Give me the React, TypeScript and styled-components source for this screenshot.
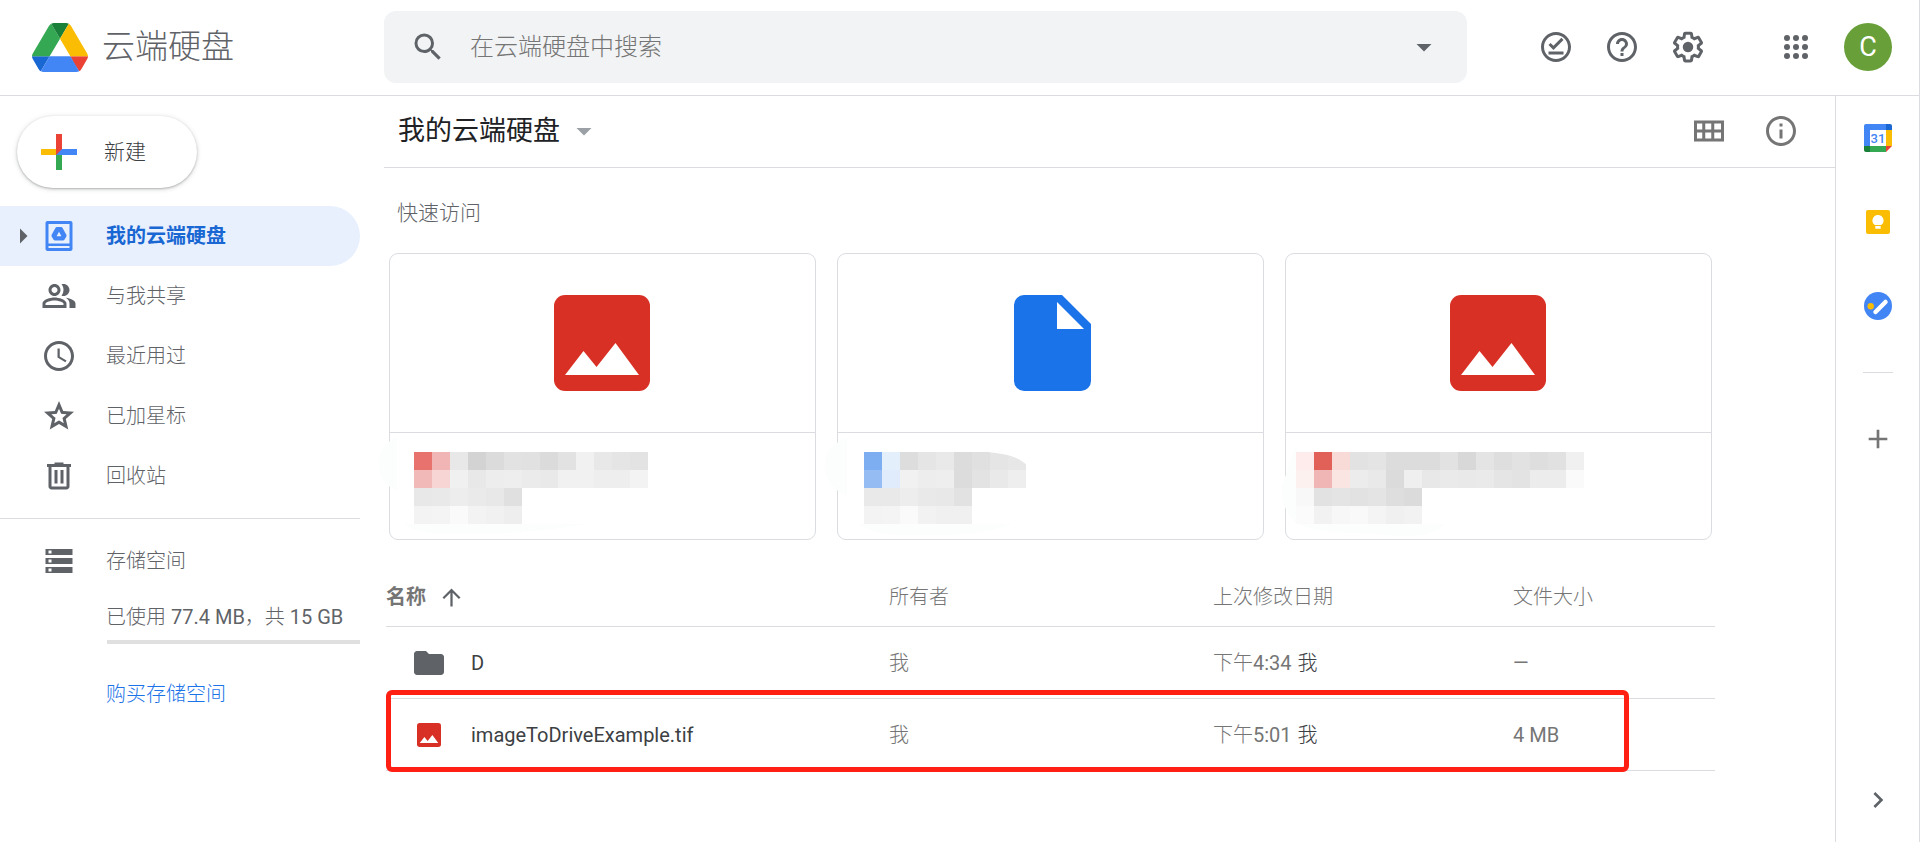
import React from 'react';
import styled, { createGlobalStyle, css } from 'styled-components';
import {
  MdAdd,
  MdArrowDropDown,
  MdArrowRight,
  MdArrowUpward,
  MdChevronRight,
  MdFolder,
  MdHelpOutline,
  MdInfoOutline,
  MdOutlineGrade,
  MdOutlineOfflinePin,
  MdSchedule,
  MdSearch,
} from 'react-icons/md';

const color = {
  line: '#dadce0',
  icon: '#5f6368',
  muted: '#757575',
  text: '#3c4043',
  title: '#202124',
  blue: '#1967d2',
  link: '#1a73e8',
  red: '#d93025',
};

const GlobalStyle = createGlobalStyle`
  *, *::before, *::after { box-sizing: border-box; }
  body {
    margin: 0;
    background: #fff;
    color: ${color.icon};
    font-family: Roboto, "Noto Sans CJK SC", sans-serif;
    font-size: 20px;
    line-height: 24px;
  }
  button, input { font: inherit; color: inherit; }
  h1, h2 { margin: 0; font-weight: 300; }
  a { text-decoration: none; }
  svg { display: block; flex: none; }
`;

const Page = styled.div`
  display: flex;
  flex-direction: column;
  min-height: 100vh;
  border-right: 1px solid ${color.line};
`;

const Header = styled.header`
  display: flex;
  align-items: center;
  height: 96px;
  padding: 0 27px 1px 0;
  border-bottom: 1px solid ${color.line};
`;

const Brand = styled.a`
  display: flex;
  align-items: center;
  gap: 14px;
  width: 384px;
  flex: none;
  padding-left: 32px;
  color: ${color.icon};
  font-size: 33px;
  font-weight: 300;
  line-height: 40px;
`;

const SearchBar = styled.form`
  display: flex;
  align-items: center;
  flex: 1;
  height: 72px;
  padding: 0 25px 0 26px;
  border-radius: 12px;
  background: #f1f3f4;
`;

const SearchInput = styled.input`
  flex: 1;
  min-width: 0;
  height: 48px;
  margin: 0 24px;
  padding: 0;
  border: 0;
  outline: 0;
  background: transparent;
  font-size: 24px;
  font-weight: 300;
  &::placeholder { color: ${color.muted}; opacity: 1; }
`;

const IconButton = styled.button`
  display: grid;
  place-items: center;
  flex: none;
  min-width: 36px;
  min-height: 36px;
  padding: 0;
  border: 0;
  background: transparent;
  color: ${(p) => p.color || color.icon};
  cursor: pointer;
`;

const HeaderActions = styled.div`
  display: flex;
  gap: 30px;
  margin-left: 71px;
`;

const AccountActions = styled.div`
  display: flex;
  align-items: center;
  gap: 30px;
  margin-left: 72px;
`;

const Avatar = styled.button`
  width: 48px;
  height: 48px;
  padding: 0;
  border: 0;
  border-radius: 50%;
  background: #689f38;
  color: #fff;
  font-size: 27px;
`;

const Body = styled.div`
  display: flex;
  flex: 1;
`;

const Sidebar = styled.aside`
  width: 360px;
  flex: none;
  margin-right: 24px;
  padding-top: 20px;
`;

const NewButton = styled.button`
  display: flex;
  align-items: center;
  gap: 27px;
  width: 180px;
  height: 72px;
  margin: 0 0 18px 17px;
  padding: 0 24px;
  border: 0;
  border-radius: 36px;
  background: #fff;
  box-shadow: 0 1px 2px rgba(60, 64, 67, 0.3), 0 1px 4px 1px rgba(60, 64, 67, 0.15);
  color: ${color.text};
  font-size: 21px;
  font-weight: 300;
`;

const NavItem = styled.a<{ $active?: boolean }>`
  display: flex;
  align-items: center;
  height: 60px;
  padding-left: 41px;
  gap: 29px;
  color: ${color.icon};
  font-weight: 300;
  ${(p) =>
    p.$active &&
    css`
      padding-left: 5px;
      border-radius: 0 30px 30px 0;
      background: #e8f0fe;
      color: ${color.blue};
      font-weight: 700;
    `}
`;

const NavGlyphs = styled.span`
  display: flex;
  align-items: center;
  color: ${color.icon};
`;

const Storage = styled.section`
  margin-top: 12px;
  padding-top: 12px;
  border-top: 1px solid ${color.line};
`;

const StorageDetails = styled.div`
  display: flex;
  flex-direction: column;
  padding: 14px 0 0 106px;
`;

const Meter = styled.div`
  height: 4px;
  margin: 11px 0 38px 1px;
  background: #e0e0e0;
`;

const BuyLink = styled.a`
  color: ${color.link};
  font-weight: 300;
`;

const Main = styled.main`
  flex: 1;
  min-width: 0;
`;

const Toolbar = styled.div`
  display: flex;
  align-items: center;
  justify-content: space-between;
  height: 72px;
  padding: 0 36px 1px 14px;
  border-bottom: 1px solid ${color.line};
`;

const PathTitle = styled.h1`
  display: flex;
  align-items: center;
  gap: 6px;
  color: ${color.title};
  font-size: 27px;
  font-weight: 400;
  line-height: 36px;
`;

const ToolbarActions = styled.div`
  display: flex;
  gap: 36px;
`;

const Content = styled.div`
  padding: 33px 120px 0 2px;
`;

const SectionTitle = styled.h2`
  padding-left: 11px;
  font-size: 21px;
`;

const Cards = styled.div`
  display: grid;
  grid-template-columns: repeat(3, 1fr);
  gap: 21px;
  margin: 28px 3px 0;
`;

const Card = styled.article`
  height: 287px;
  border: 1px solid ${color.line};
  border-radius: 9px;
`;

const Preview = styled.div`
  display: grid;
  place-items: center;
  height: 179px;
  padding-right: 2px;
  border-bottom: 1px solid ${color.line};
`;

const Caption = styled.div`
  position: relative;
`;

const Mosaic = styled.svg`
  position: absolute;
  top: -1px;
  left: -16px;
`;

const TableWrap = styled.div`
  position: relative;
  margin-top: 27px;
`;

const Table = styled.table`
  width: 100%;
  table-layout: fixed;
  border-collapse: separate;
  border-spacing: 0;
`;

const Col = styled.col<{ $w?: number }>`
  width: ${(p) => (p.$w ? `${p.$w}px` : 'auto')};
`;

const Th = styled.th<{ $strong?: boolean }>`
  height: 60px;
  padding: 1px 0 0;
  border-bottom: 1px solid ${color.line};
  color: ${color.muted};
  font-weight: ${(p) => (p.$strong ? 700 : 300)};
  text-align: left;
`;

const SortButton = styled.button`
  display: flex;
  align-items: center;
  gap: 12px;
  padding: 0;
  border: 0;
  background: transparent;
  svg { color: ${color.icon}; }
`;

const Td = styled.td`
  height: 72px;
  padding: 0;
  border-bottom: 1px solid ${color.line};
  color: ${color.muted};
  white-space: nowrap;
`;

const FileName = styled.span`
  display: flex;
  align-items: center;
  gap: 24px;
  padding-left: 25px;
  color: ${color.text};
`;

const FileGlyph = styled.span`
  display: grid;
  place-items: center;
  width: 36px;
  height: 36px;
  color: ${color.icon};
`;

const Cjk = styled.span<{ $by?: boolean }>`
  font-weight: 300;
  ${(p) =>
    p.$by &&
    css`
      margin-left: 6px;
      color: ${color.text};
    `}
`;

const Highlight = styled.div`
  position: absolute;
  left: 0;
  right: 86px;
  bottom: -1px;
  height: 82px;
  border: 5px solid #ff2013;
  border-radius: 6px;
  pointer-events: none;
`;

const SidePanel = styled.aside`
  display: flex;
  flex-direction: column;
  align-items: center;
  width: 84px;
  flex: none;
  padding: 24px 0;
  border-left: 1px solid ${color.line};
`;

const AppList = styled.div`
  display: grid;
  gap: 48px;
`;

const PanelRule = styled.hr`
  width: 30px;
  height: 1px;
  margin: 48px 0;
  border: 0;
  background: ${color.line};
`;

const PanelToggle = styled(IconButton)`
  margin-top: auto;
`;

const DriveLogo = () => (
  <svg width="56" height="49" viewBox="0 0 87.3 78" preserveAspectRatio="none">
    <path d="m6.6 66.85 3.85 6.65c.8 1.4 1.95 2.5 3.3 3.3l13.75-23.8h-27.5c0 1.55.4 3.1 1.2 4.5z" fill="#1967d2" />
    <path d="m43.65 25-13.75-23.8c-1.35.8-2.5 1.9-3.3 3.3l-25.4 44a9.06 9.06 0 0 0 -1.2 4.5h27.5z" fill="#34a853" />
    <path d="m73.55 76.8c1.35-.8 2.5-1.9 3.3-3.3l1.6-2.75 7.65-13.25c.8-1.4 1.2-2.95 1.2-4.5h-27.5l5.85 11.5z" fill="#ea4335" />
    <path d="m43.65 25 13.75-23.8c-1.35-.8-2.9-1.2-4.5-1.2h-18.5c-1.6 0-3.15.45-4.5 1.2z" fill="#188038" />
    <path d="m59.8 53h-32.3l-13.75 23.8c1.35.8 2.9 1.2 4.5 1.2h50.8c1.6 0 3.15-.45 4.5-1.2z" fill="#4285f4" />
    <path d="m73.4 26.5-12.7-22c-.8-1.4-1.95-2.5-3.3-3.3l-13.75 23.8 16.15 28h27.45c0-1.55-.4-3.1-1.2-4.5z" fill="#fbbc04" />
  </svg>
);

const PlusMark = () => (
  <svg width="36" height="36" viewBox="0 0 36 36">
    <path fill="#34a853" d="M15 15v21h6V21z" />
    <path fill="#4285f4" d="M36 15H20l-5 6h21z" />
    <path fill="#fbbc04" d="M0 15h15v6H0z" />
    <path fill="#ea4335" d="M21 15V0h-6v21z" />
  </svg>
);

const Glyph = ({ d, children }: { d?: string; children?: React.ReactNode }) => (
  <svg width="36" height="36" viewBox="0 0 24 24" fill="currentColor">
    {d && <path fillRule="evenodd" d={d} />}
    {children}
  </svg>
);

const MyDriveIcon = () => (
  <svg width="36" height="36" viewBox="0 0 24 24">
    <path
      fill="#4285f4"
      fillRule="evenodd"
      d="M4.3 2h15.4C20.4 2 21 2.6 21 3.3v17.4c0 .7-.6 1.3-1.3 1.3H4.3c-.7 0-1.3-.6-1.3-1.3V3.3C3 2.6 3.6 2 4.3 2zM5 4v13h14V4zM5 18.6V20h14v-1.4z"
    />
    <path
      fill="#4285f4"
      fillRule="evenodd"
      d="M10.6 6h2.8c.4 0 .7.2.9.5l2.6 4.7c.2.4.2.8 0 1.1l-1.3 2.2c-.2.3-.5.5-.9.5H9.3c-.4 0-.7-.2-.9-.5l-1.3-2.2c-.2-.3-.2-.7 0-1.1L9.7 6.5c.2-.3.5-.5.9-.5zM12 9.2l-1.6 2.9h3.2z"
    />
  </svg>
);

const PEOPLE =
  'M15 8c0-1.42-.5-2.73-1.33-3.76.42-.14.86-.24 1.33-.24 2.21 0 4 1.79 4 4s-1.79 4-4 4c-.43 0-.84-.09-1.23-.21-.03-.01-.06-.02-.1-.03A5.98 5.98 0 0 0 15 8zm1.66 5.13C18.03 14.06 19 15.32 19 17v3h4v-3c0-2.18-3.58-3.47-6.34-3.87zM9 6c-1.1 0-2 .9-2 2s.9 2 2 2 2-.9 2-2-.9-2-2-2zm0 9c-2.7 0-5.8 1.29-6 2.01V18h12v-1c-.2-.71-3.3-2-6-2zM9 4c2.21 0 4 1.79 4 4s-1.79 4-4 4-4-1.79-4-4 1.79-4 4-4zm0 9c2.67 0 8 1.34 8 4v3H1v-3c0-2.66 5.33-4 8-4z';
const TRASH =
  'M15 4V3H9v1H4v2h1v13c0 1.1.9 2 2 2h10c1.1 0 2-.9 2-2V6h1V4h-5zm2 15H7V6h10v13zM9 8h2v9H9zm4 0h2v9h-2z';
const STORAGE =
  'M3 4h18v4H3zM5 5v2h2V5zM3 10h18v4H3zM5 11v2h2v-2zM3 16h18v4H3zM5 17v2h2v-2z';
const GRID =
  'M2 5h20v14H2zM4 7v4h3.5V7zM9.5 7v4h4V7zM15.5 7v4H20V7zM4 13v4h3.5v-4zM9.5 13v4h4v-4zM15.5 13v4H20v-4z';
const GEAR =
  'M13.85 22.25h-3.7c-.74 0-1.36-.54-1.45-1.27l-.27-1.89c-.27-.14-.53-.29-.79-.46l-1.8.72c-.7.26-1.47-.03-1.81-.65L2.2 15.53c-.35-.66-.2-1.44.36-1.88l1.53-1.19c-.01-.15-.02-.3-.02-.46 0-.15.01-.31.02-.46l-1.52-1.19c-.59-.45-.74-1.26-.37-1.88l1.85-3.19c.34-.62 1.11-.9 1.79-.63l1.81.73c.26-.17.52-.32.78-.46l.27-1.91c.09-.7.71-1.25 1.44-1.25h3.7c.74 0 1.36.54 1.45 1.27l.27 1.89c.27.14.53.29.79.46l1.8-.72c.71-.26 1.48.03 1.82.65l1.84 3.18c.36.66.2 1.44-.36 1.88l-1.52 1.19c.01.15.02.3.02.46s-.01.31-.02.46l1.52 1.19c.56.45.72 1.23.37 1.86l-1.86 3.22c-.34.62-1.11.9-1.8.63l-1.8-.72c-.26.17-.52.32-.78.46l-.27 1.91c-.1.68-.72 1.22-1.46 1.22zm-3.23-2h2.76l.37-2.55.53-.22c.44-.18.88-.44 1.34-.78l.45-.34 2.38.96 1.38-2.4-2.03-1.58.07-.56c.03-.26.06-.51.06-.78s-.03-.53-.06-.78l-.07-.56 2.03-1.58-1.39-2.4-2.39.96-.45-.35c-.42-.32-.87-.58-1.33-.77l-.52-.22-.37-2.55h-2.76l-.37 2.55-.53.21c-.44.19-.88.44-1.34.79l-.45.33-2.38-.95-1.39 2.39 2.03 1.58-.07.56a7 7 0 0 0-.06.79c0 .26.02.53.06.78l.07.56-2.03 1.58 1.38 2.4 2.39-.96.45.35c.43.33.86.58 1.33.77l.53.22.38 2.55z';

const AppsIcon = () => (
  <Glyph>
    {[6, 12, 18].flatMap((y) => [6, 12, 18].map((x) => <circle key={`${x}-${y}`} cx={x} cy={y} r="2" />))}
  </Glyph>
);

const ImageIcon = ({ size }: { size: number }) => (
  <svg width={size} height={size} viewBox="0 0 96 96">
    <rect width="96" height="96" rx="11" fill={color.red} />
    <path fill="#fff" d="M11 80 29.5 56 42.5 72 61.500 48 85 80z" />
  </svg>
);

const DocumentIcon = () => (
  <svg width="96" height="96" viewBox="0 0 96 96">
    <path
      fill={color.link}
      fillRule="evenodd"
      d="M22 0h38l29 29v57a10 10 0 0 1-10 10H22a10 10 0 0 1-10-10V10A10 10 0 0 1 22 0zm33 7v27h27z"
    />
  </svg>
);

const CalendarIcon = () => (
  <svg width="28" height="28" viewBox="0 0 28 28">
    <path fill="#fff" d="M5 5h18v18H5z" />
    <path fill="#4285f4" d="M2 0h20v6H6v16H0V2a2 2 0 0 1 2-2z" />
    <path fill="#1967d2" d="M22 0h4a2 2 0 0 1 2 2v4h-6z" />
    <path fill="#fbbc04" d="M22 6h6v16h-6z" />
    <path fill="#34a853" d="M6 22h16v6H6z" />
    <path fill="#188038" d="M0 22h6v6H2a2 2 0 0 1-2-2z" />
    <path fill="#ea4335" d="M22 22h6l-6 6z" />
    <text x="14" y="19" textAnchor="middle" fontFamily="Roboto" fontSize="13" fontWeight="500" fill="#4285f4">31</text>
  </svg>
);

const KeepIcon = () => (
  <svg width="24" height="24" viewBox="0 0 24 24">
    <rect width="24" height="24" rx="2" fill="#fbbc04" />
    <path fill="#fff" d="M12 5a5.5 5.5 0 0 0-3.2 10h6.4A5.5 5.5 0 0 0 12 5zM9.3 16h5.4v2.7H9.3z" />
  </svg>
);

const TasksIcon = () => (
  <svg width="28" height="28" viewBox="0 0 28 28">
    <circle cx="14" cy="14" r="14" fill="#4285f4" />
    <path d="M11.5 20 21.5 10" stroke="#fff" strokeWidth="4.5" strokeLinecap="round" />
    <circle cx="6.7" cy="14.3" r="3.2" fill="#fbbc04" />
  </svg>
);

type Smudge = {
  x: number;
  rows: string[][];
  halo: string;
  mask?: string;
};

const grey = (s: string) => s.split(' ').map((v) => `#${v.length === 2 ? v.repeat(3) : v}`);

const smudges: Smudge[] = [
  {
    x: 41,
    rows: [
      grey('e7726e f2b5b5 e8 d3 db e2 e1 db e2 f1 e8 e5 e3'),
      grey('f2b9b9 f8d5d5 f0 e8 ed ee eb e9 f1 f1 ee ee f3'),
      grey('e8 e9 ed ea e8 e0'),
      grey('f3 f4 fa f3 f1 ee'),
    ],
    halo: 'M23 5C10 11 5 20 5 32s6 23 18 26zM31 92c8 7 20 9 45 10 50 1 90-3 138-10z',
  },
  {
    x: 43,
    rows: [
      grey('7daef2 e4effc dd e5 e9 dc e0 e5 e7'),
      grey('95bdf4 e0ecfb f1 ed ee dc e3 e9 ee'),
      grey('e9 e9 ed e9 e8 e2'),
      grey('f3 f4 fa f2 f0 f0'),
    ],
    halo: 'M25 6C10 11 3 21 3 34s8 25 22 29zM37 92c12 8 24 11 50 11 60 1 80-3 103-11z',
    mask: 'M161 19c14 3 31 2 44 14V19z',
  },
  {
    x: 27,
    rows: [
      grey('fdeceb e16057 f8dad7 e2 e4 dc dc dc e2 d8 e4 de e2 de e1 f0'),
      grey('fdf1f0 f0b5b5 fae5e3 ec e9 db ef e8 ea e9 ea e5 e3 ec ec fa'),
      grey('f8 e2 e4 e2 e4 de db'),
      grey('fb f2 f7 f9 f4 f0 f2'),
    ],
    halo: 'M27 13C20 26 18 38 14 48c-6 14 0 32 13 44zM27 92c20 8 45 9 80 10 45 6 60-2 68-10z',
  },
];

const PixelatedName = ({ x, rows, halo, mask }: Smudge) => (
  <Mosaic width="340" height="106" viewBox="0 0 340 106" aria-hidden="true">
    <path d={halo} fill="#fbfefd" />
    {rows.map((row, r) =>
      row.map((fill, c) => (
        <rect key={`${r}-${c}`} x={x + c * 18 - 1} y={20 + r * 18} width="18" height="18" fill={fill} shapeRendering="crispEdges" />
      )),
    )}
    {mask && <path d={mask} fill="#fff" />}
  </Mosaic>
);

const navItems = [
  { label: '与我共享', icon: <Glyph d={PEOPLE} /> },
  { label: '最近用过', icon: <MdSchedule size={36} /> },
  { label: '已加星标', icon: <MdOutlineGrade size={36} /> },
  { label: '回收站', icon: <Glyph d={TRASH} /> },
];

const files = [
  { name: 'D', icon: <MdFolder size={36} />, time: '4:34', size: '—' },
  { name: 'imageToDriveExample.tif', icon: <ImageIcon size={24} />, time: '5:01', size: '4 MB' },
];

export default function App() {
  return (
    <Page>
      <GlobalStyle />
      <Header>
        <Brand href="#">
          <DriveLogo />
          云端硬盘
        </Brand>
        <SearchBar role="search">
          <IconButton type="button" aria-label="搜索"><MdSearch size={36} /></IconButton>
          <SearchInput type="text" aria-label="在云端硬盘中搜索" placeholder="在云端硬盘中搜索" />
          <IconButton type="button" aria-label="搜索选项"><MdArrowDropDown size={36} /></IconButton>
        </SearchBar>
        <HeaderActions>
          <IconButton aria-label="离线状态"><MdOutlineOfflinePin size={36} /></IconButton>
          <IconButton aria-label="帮助"><MdHelpOutline size={36} /></IconButton>
          <IconButton aria-label="设置">
            <Glyph d={GEAR}><circle cx="12" cy="12" r="3.5" /></Glyph>
          </IconButton>
        </HeaderActions>
        <AccountActions>
          <IconButton aria-label="应用"><AppsIcon /></IconButton>
          <Avatar>C</Avatar>
        </AccountActions>
      </Header>

      <Body>
        <Sidebar>
          <NewButton><PlusMark />新建</NewButton>
          <nav>
            <NavItem href="#" $active>
              <NavGlyphs><MdArrowRight size={36} /><MyDriveIcon /></NavGlyphs>
              我的云端硬盘
            </NavItem>
            {navItems.map((item) => (
              <NavItem href="#" key={item.label}>{item.icon}{item.label}</NavItem>
            ))}
          </nav>
          <Storage>
            <NavItem href="#"><Glyph d={STORAGE} />存储空间</NavItem>
            <StorageDetails>
              <span><Cjk>已使用</Cjk> 77.4 MB<Cjk>，共</Cjk> 15 GB</span>
              <Meter />
              <BuyLink href="#">购买存储空间</BuyLink>
            </StorageDetails>
          </Storage>
        </Sidebar>

        <Main>
          <Toolbar>
            <PathTitle>
              我的云端硬盘
              <IconButton aria-label="文件夹操作" color="#9aa0a6"><MdArrowDropDown size={36} /></IconButton>
            </PathTitle>
            <ToolbarActions>
              <IconButton aria-label="网格布局" color={color.muted}><Glyph d={GRID} /></IconButton>
              <IconButton aria-label="查看详细信息" color={color.muted}><MdInfoOutline size={36} /></IconButton>
            </ToolbarActions>
          </Toolbar>
          <Content>
            <SectionTitle>快速访问</SectionTitle>
            <Cards>
              {smudges.map((smudge, i) => (
                <Card key={smudge.x}>
                  <Preview>{i === 1 ? <DocumentIcon /> : <ImageIcon size={96} />}</Preview>
                  <Caption><PixelatedName {...smudge} /></Caption>
                </Card>
              ))}
            </Cards>
            <TableWrap>
              <Table>
                <colgroup>
                  <Col />
                  <Col $w={324} />
                  <Col $w={300} />
                  <Col $w={202} />
                </colgroup>
                <thead>
                  <tr>
                    <Th $strong><SortButton>名称<MdArrowUpward size={27} /></SortButton></Th>
                    <Th>所有者</Th>
                    <Th>上次修改日期</Th>
                    <Th>文件大小</Th>
                  </tr>
                </thead>
                <tbody>
                  {files.map((file) => (
                    <tr key={file.name}>
                      <Td><FileName><FileGlyph>{file.icon}</FileGlyph>{file.name}</FileName></Td>
                      <Td><Cjk>我</Cjk></Td>
                      <Td><Cjk>下午</Cjk>{file.time}<Cjk $by>我</Cjk></Td>
                      <Td>{file.size}</Td>
                    </tr>
                  ))}
                </tbody>
              </Table>
              <Highlight />
            </TableWrap>
          </Content>
        </Main>

        <SidePanel>
          <AppList>
            <IconButton aria-label="日历"><CalendarIcon /></IconButton>
            <IconButton aria-label="Keep"><KeepIcon /></IconButton>
            <IconButton aria-label="Tasks"><TasksIcon /></IconButton>
          </AppList>
          <PanelRule />
          <IconButton aria-label="获取插件" color={color.muted}><MdAdd size={32} /></IconButton>
          <PanelToggle aria-label="隐藏侧边栏"><MdChevronRight size={32} /></PanelToggle>
        </SidePanel>
      </Body>
    </Page>
  );
}
